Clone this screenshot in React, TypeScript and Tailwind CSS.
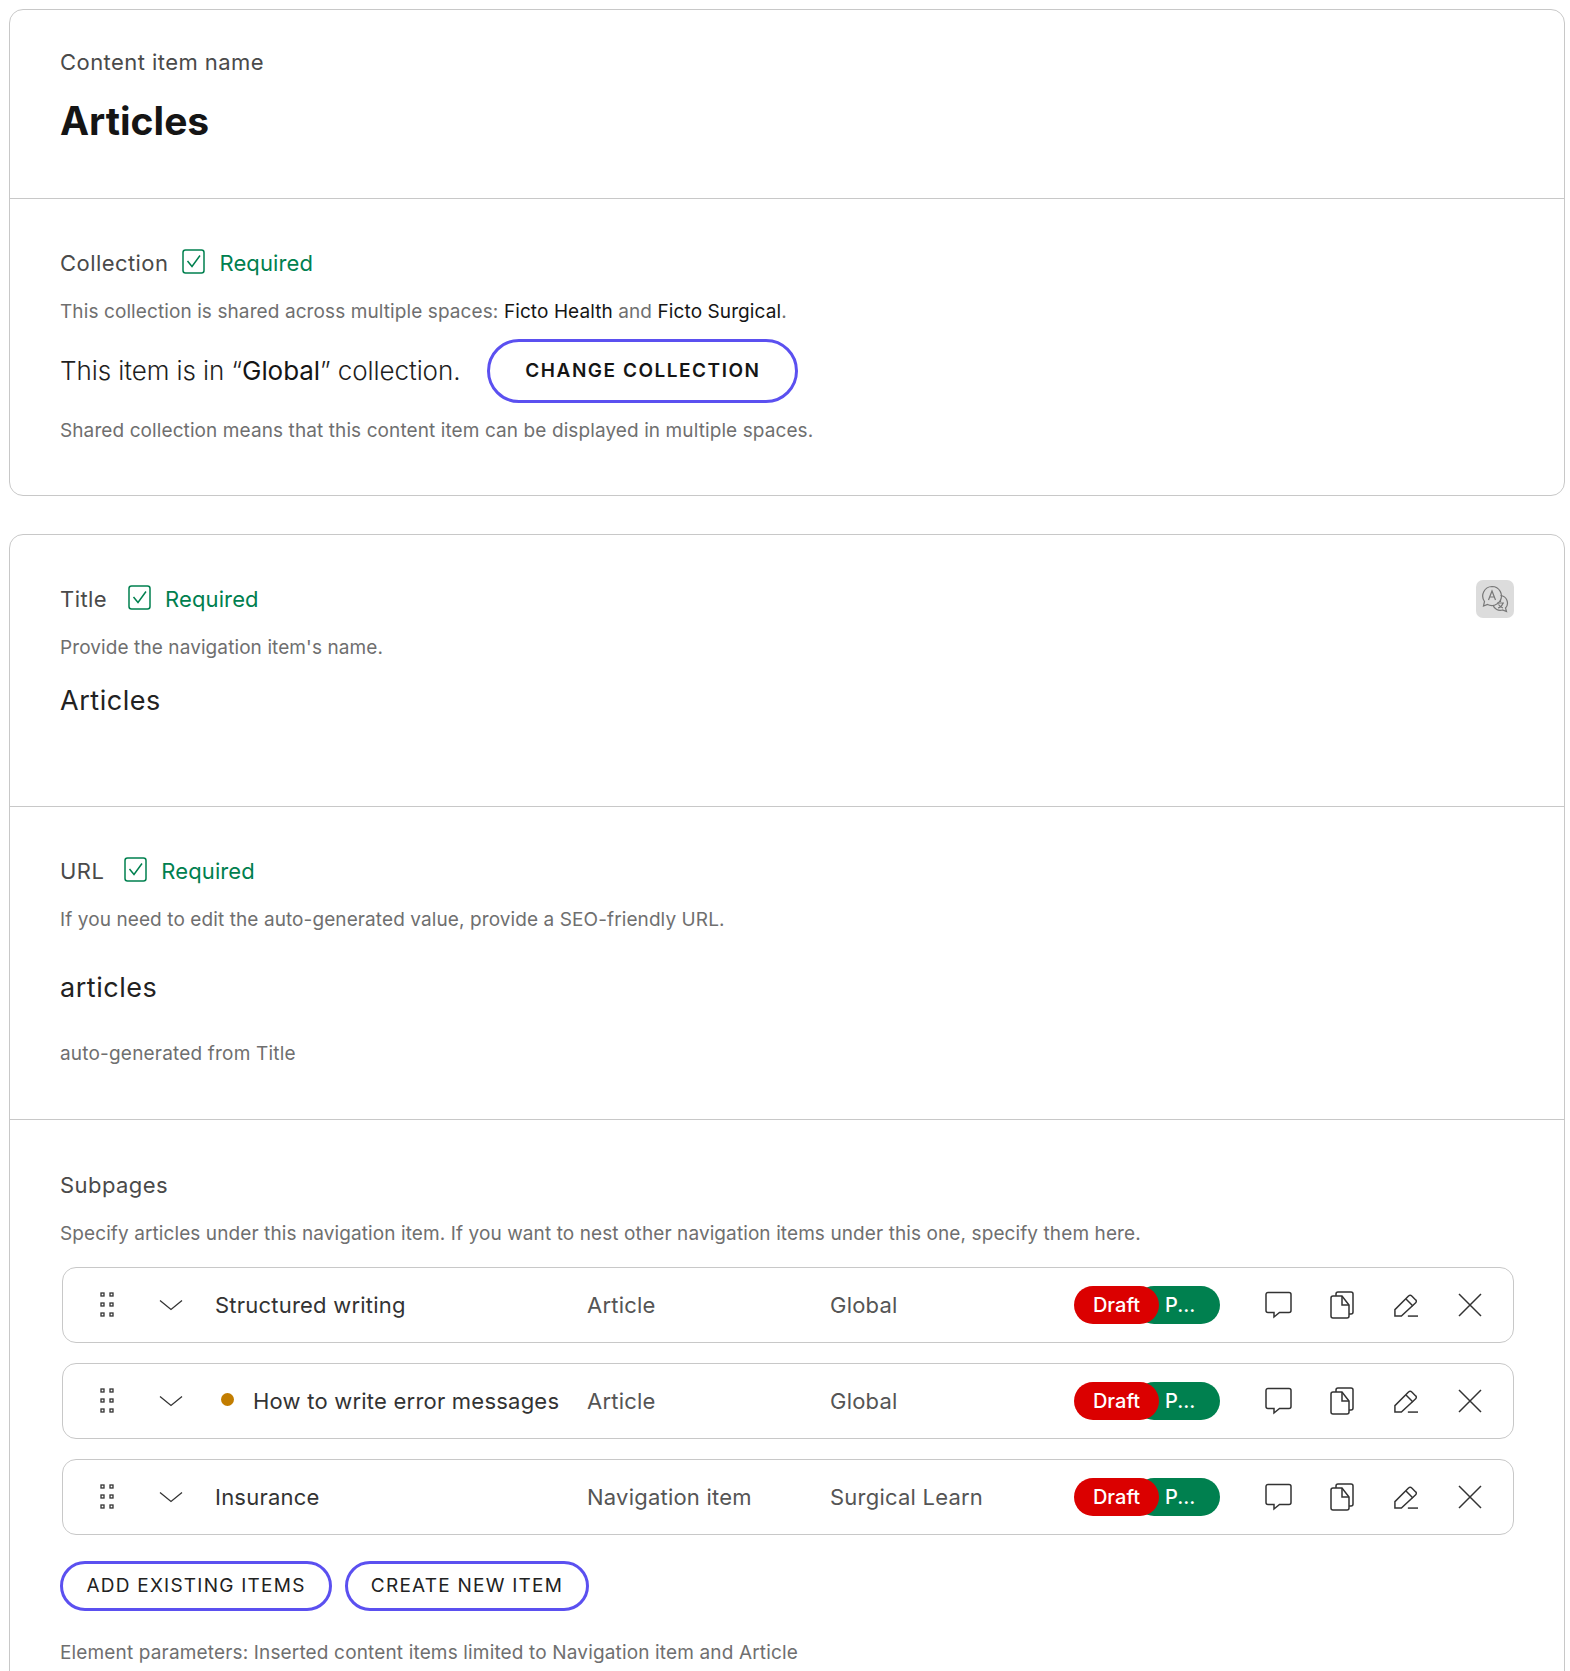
const font = { fontFamily: "Inter, 'Noto Sans', sans-serif" };

const CheckBoxIcon = () => (
  <svg width="23" height="25" viewBox="0 0 23 25" fill="none" stroke="#00804f" strokeWidth="1.5" className="-translate-y-[2px]">
    <rect x="1" y="1" width="21" height="23" rx="2.5" />
    <path d="M5.500 12l4.500 5.500 8-11" />
  </svg>
);

const GripIcon = () => (
  <svg width="14" height="26" viewBox="0 0 14 26" fill="none" stroke="#333" strokeWidth="1.3" className="block">
    <rect x="1" y="1" width="3" height="3" />
    <rect x="10" y="1" width="3" height="3" />
    <rect x="1" y="11" width="3" height="3" />
    <rect x="10" y="11" width="3" height="3" />
    <rect x="1" y="21" width="3" height="3" />
    <rect x="10" y="21" width="3" height="3" />
  </svg>
);

const ChevronIcon = () => (
  <svg width="24" height="12" viewBox="0 0 24 12" fill="none" stroke="#333" strokeWidth="1.3" className="block">
    <path d="M1 1.500l11 9 11-9" />
  </svg>
);

const CommentIcon = () => (
  <svg width="28" height="28" viewBox="0 0 28 28" fill="none" stroke="#333" strokeWidth="1.5" className="block">
    <path d="M4 1.500h21a2 2 0 0 1 2 2v16a2 2 0 0 1-2 2H15.500l-5.500 4.500v-4.500H4a2 2 0 0 1-2-2v-16a2 2 0 0 1 2-2z" />
  </svg>
);

const CopyIcon = () => (
  <svg width="24" height="28" viewBox="0 0 24 28" fill="none" stroke="#333" strokeWidth="1.5" className="block">
    <path d="M6 5V3a2 2 0 0 1 2-2h13a2 2 0 0 1 2 2v18a2 2 0 0 1-2 2h-2" />
    <path d="M3 5h9l7 9v11a2 2 0 0 1-2 2H3a2 2 0 0 1-2-2V7a2 2 0 0 1 2-2z" />
    <path d="M12 5v9h7" />
  </svg>
);

const EditIcon = () => (
  <svg width="24" height="24" viewBox="0 0 26 26" fill="none" stroke="#333" strokeWidth="1.6" className="block">
    <path d="M1 25v-7L16 3a2 2 0 0 1 3 0l4.500 4.500a2 2 0 0 1 0 3L8 25z" />
    <path d="M13 6.500l7.500 7.500" />
    <path d="M15 25h11" />
  </svg>
);

const CloseIcon = () => (
  <svg width="24" height="24" viewBox="0 0 24 24" fill="none" stroke="#333" strokeWidth="1.5" className="block">
    <path d="M1 1l22 22M23 1L1 23" />
  </svg>
);

const TranslateIcon = () => (
  <svg width="28" height="28" viewBox="0 0 28 28" fill="none" stroke="#777" strokeWidth="1.2">
    <path d="M11 1.500a9.500 9.500 0 0 1 8 14.500 9.500 9.500 0 0 1-12.500 3.500L2.500 21l1-4.500A9.500 9.500 0 0 1 11 1.500z" />
    <path d="M7.500 15l3.500-9 3.500 9M8.800 12h4.400" />
    <path d="M19.500 10.500a7.500 7.500 0 0 1 5 12.500l1 3.500-4-1.500a7.500 7.500 0 0 1-9.500-5" />
    <path d="M16 18h7M19.500 15v2M22 18c-1 3-3 4.500-5 5M17.500 19.500c1 1.500 2.500 3 4.500 3.500" />
  </svg>
);

const Required = () => (
  <span className="flex items-center gap-[14px] tracking-[0.005em] text-[#00804f]">
    <CheckBoxIcon />
    <span>Required</span>
  </span>
);

const rows = [
  { name: "Structured writing", type: "Article", collection: "Global", dot: false },
  { name: "How to write error messages", type: "Article", collection: "Global", dot: true },
  { name: "Insurance", type: "Navigation item", collection: "Surgical Learn", dot: false },
];

function ItemRow({ row }: { row: (typeof rows)[number] }) {
  return (
    <div className="flex h-[76px] items-center rounded-[14px] border border-[#c8c8c8] text-[22px] leading-none tracking-[0.01em] text-[#333]">
      <div className="flex w-[75px] justify-end pl-[37px]">
        <div className="w-[38px]"><GripIcon /></div>
      </div>
      <div className="ml-[21px] w-[56px]"><ChevronIcon /></div>
      <div className="flex w-[372px] items-center">
        {row.dot && <span className="ml-[6px] mr-[19px] h-[13px] w-[13px] -translate-y-[2px] rounded-full bg-[#c27d00]" />}
        <span className="whitespace-nowrap">{row.name}</span>
      </div>
      <div className="w-[243px] text-[#555]">{row.type}</div>
      <div className="w-[244px] text-[#555]">{row.collection}</div>
      <div className="flex w-[146px] text-[20px] font-medium tracking-normal text-white">
        <span className="relative z-10 flex h-[38px] w-[85px] items-center justify-center rounded-full bg-[#db0000]">Draft</span>
        <span className="-ml-[24px] flex h-[38px] w-[85px] items-center rounded-full bg-[#00804f] pl-[30px]">P...</span>
      </div>
      <div className="ml-[44px] flex w-[28px] justify-center"><CommentIcon /></div>
      <div className="ml-[36px] flex w-[28px] justify-center"><CopyIcon /></div>
      <div className="ml-[36px] flex w-[28px] justify-center"><EditIcon /></div>
      <div className="ml-[36px] flex w-[28px] justify-center"><CloseIcon /></div>
    </div>
  );
}

export default function App() {
  return (
    <div className="h-[1671px] overflow-hidden bg-white pl-[9px] pr-[5px] pt-[9px] text-[#333]" style={font}>
      <section className="h-[487px] rounded-[14px] border border-[#c8c8c8]">
        <div className="h-[189px] border-b border-[#c8c8c8] pl-[50px] pt-[39px]">
          <div className="text-[22px] leading-[26px] tracking-[0.02em] text-[#4a4a4a]">Content item name</div>
          <h1 className="mt-[23px] text-[39px] font-bold leading-[46px] text-[#151515]">Articles</h1>
        </div>
        <div className="pl-[50px] pt-[52px]">
          <div className="flex h-[24px] items-center gap-[14px] text-[22px] tracking-[0.02em] text-[#4a4a4a]">
            <span>Collection</span>
            <Required />
          </div>
          <p className="mt-[25px] text-[19px] leading-[24px] tracking-[0.005em] text-[#6f6f6f]">
            This collection is shared across multiple spaces: <span className="text-[#151515]">Ficto Health</span> and <span className="text-[#151515]">Ficto Surgical</span>.
          </p>
          <div className="mt-[15px] flex items-center">
            <span className="text-[26px] font-light leading-none tracking-[-0.003em] text-[#1f1f1f]">This item is in “<span className="font-normal text-[#151515]">Global</span>” collection.</span>
            <button className="ml-[27px] h-[64px] w-[311px] rounded-[32px] border-[3px] border-[#5b50f0] text-[19px] font-semibold tracking-[0.08em] text-[#151515]">CHANGE COLLECTION</button>
          </div>
          <p className="mt-[16px] text-[19px] leading-[24px] tracking-[0.005em] text-[#6f6f6f]">Shared collection means that this content item can be displayed in multiple spaces.</p>
        </div>
      </section>

      <section className="mt-[38px] h-[1200px] rounded-t-[14px] border border-[#c8c8c8]">
        <div className="h-[272px] border-b border-[#c8c8c8] pl-[50px] pr-[50px] pt-[45px]">
          <div className="flex items-center justify-between">
            <div className="flex h-[24px] items-center gap-[21px] text-[22px] tracking-[0.02em] text-[#4a4a4a]">
              <span>Title</span>
              <Required />
            </div>
            <div className="flex h-[38px] w-[38px] items-center justify-center rounded-[7px] bg-[#dcdcdc]"><TranslateIcon /></div>
          </div>
          <p className="mt-[18px] text-[19px] leading-[24px] tracking-[0.005em] text-[#6f6f6f]">Provide the navigation item's name.</p>
          <div className="mt-[21px] text-[27px] leading-[40px] tracking-[0.02em] text-[#222]">Articles</div>
        </div>
        <div className="h-[313px] border-b border-[#c8c8c8] pl-[50px] pt-[52px]">
          <div className="flex h-[24px] items-center gap-[20px] text-[22px] tracking-[0.02em] text-[#4a4a4a]">
            <span>URL</span>
            <Required />
          </div>
          <p className="mt-[25px] text-[19px] leading-[24px] tracking-[0.005em] text-[#6f6f6f]">If you need to edit the auto-generated value, provide a SEO-friendly URL.</p>
          <div className="mt-[36px] text-[27px] leading-[40px] tracking-[0.02em] text-[#222]">articles</div>
          <p className="mt-[34px] text-[19px] leading-[24px] tracking-[0.01em] text-[#6f6f6f]">auto-generated from Title</p>
        </div>
        <div className="pl-[50px] pr-[50px] pt-[53px]">
          <div className="h-[24px] text-[22px] leading-[24px] tracking-[0.02em] text-[#4a4a4a]">Subpages</div>
          <p className="mt-[25px] text-[19px] leading-[24px] tracking-[0.005em] text-[#6f6f6f]">Specify articles under this navigation item. If you want to nest other navigation items under this one, specify them here.</p>
          <div className="ml-[2px] mt-[21px] flex flex-col gap-[20px]">
            {rows.map((row) => (
              <ItemRow key={row.name} row={row} />
            ))}
          </div>
          <div className="mt-[26px] flex gap-[13px]">
            <button className="h-[50px] w-[272px] rounded-[25px] border-[3px] border-[#5b50f0] text-[19px] tracking-[0.065em] text-[#222]">ADD EXISTING ITEMS</button>
            <button className="h-[50px] w-[244px] rounded-[25px] border-[3px] border-[#5b50f0] text-[19px] tracking-[0.065em] text-[#222]">CREATE NEW ITEM</button>
          </div>
          <p className="mt-[30px] text-[19px] leading-[24px] tracking-[0.008em] text-[#6f6f6f]">Element parameters: Inserted content items limited to Navigation item and Article</p>
        </div>
      </section>
    </div>
  );
}
